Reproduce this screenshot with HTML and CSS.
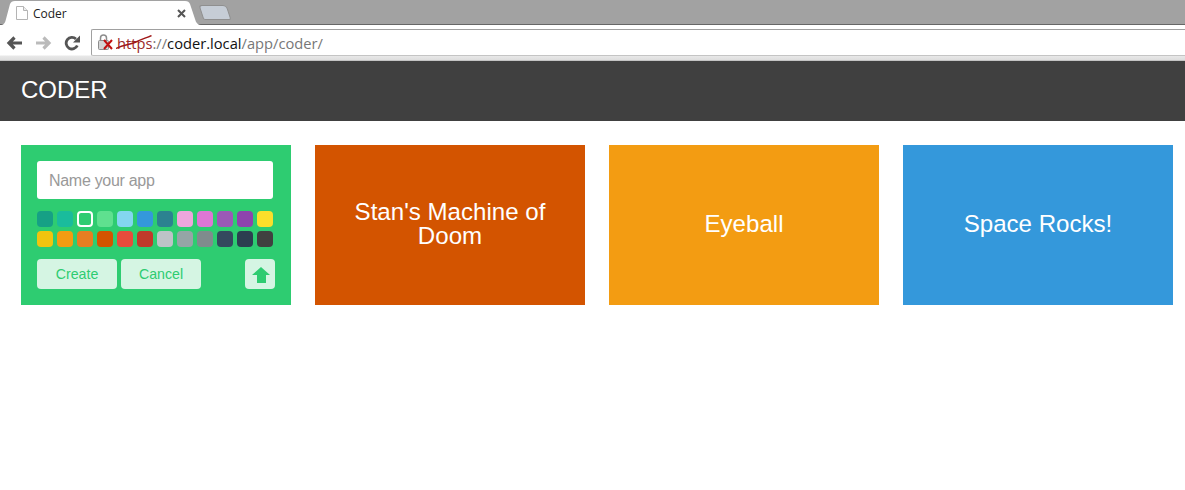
FILE: index.html
```html
<!DOCTYPE html>
<html lang="en">
<head>
	<meta charset="UTF-8">
	<title>Coder</title>
	<link rel="stylesheet" href="styles.css">
</head>
<body>
	<div class="chrome">
		<div class="tabstrip">
			<div class="tab">
				<svg class="tab-page" width="12" height="14" viewBox="0 0 12 14"><path d="M.5.500h7l4 4v9h-11z" fill="#fff" stroke="#b4b4b4"/><path d="M7.500.500v4h4" fill="#eee" stroke="#b4b4b4"/></svg>
				<span class="tab-title">Coder</span>
				<svg class="tab-x" width="9" height="9" viewBox="0 0 9 9"><path d="M1 1l7 7M8 1l-7 7" stroke="#555" stroke-width="2"/></svg>
			</div>
			<div class="newtab"></div>
		</div>
		<div class="toolbar">
			<svg class="nav" width="17" height="14" viewBox="0 0 17 14"><path d="M16 7H4M8.500 1.500L3 7l5.500 5.500" fill="none" stroke="#555" stroke-width="3.200"/></svg>
			<svg class="nav" width="17" height="14" viewBox="0 0 17 14"><path d="M1 7h12M8.500 1.500L14 7l-5.500 5.500" fill="none" stroke="#bbb" stroke-width="3.200"/></svg>
			<svg class="nav" width="16" height="16" viewBox="0 0 16 16"><path d="M13.300 10.500A5.800 5.800 0 1 1 12 4" fill="none" stroke="#555" stroke-width="2.800"/><path d="M9 7.500h7v-7z" fill="#555"/></svg>
			<div class="omnibox">
				<svg class="lock" width="16" height="17" viewBox="0 0 16 17"><rect x="1.500" y="6.500" width="10" height="9" rx="1" fill="#d4d4d4" stroke="#8c8c8c"/><path d="M3.500 6.500V4a3 3 0 0 1 6 0v2.500" fill="none" stroke="#8c8c8c" stroke-width="1.500"/><path d="M7 6l8 9M15 6l-8 9" stroke="#c01010" stroke-width="2"/></svg>
				<span class="url"><span class="scheme">https<svg class="slash" width="36" height="14" viewBox="0 0 36 14"><path d="M0 13.500C8 9 14 10 20 7S30 3 35.500 .5" fill="none" stroke="#a01818" stroke-width="1.400"/></svg></span><span class="path">://</span>coder.local<span class="path">/app/coder/</span></span>
			</div>
		</div>
	</div>

	<header class="appbar">CODER</header>

	<main class="apps">
		<form class="card card-new">
			<input class="name" type="text" placeholder="Name your app">
			<div class="swatches" id="swatches"></div>
			<div class="actions">
				<button class="btn" type="button">Create</button>
				<button class="btn" type="button">Cancel</button>
				<button class="btn btn-upload" type="button" aria-label="Upload">
					<svg width="18" height="16" viewBox="0 0 18 16"><path d="M9 0l9 8h-4v8H5V8H0z" fill="#2ecc71"/></svg>
				</button>
			</div>
		</form>
		<a class="card app pumpkin">Stan's Machine of Doom</a>
		<a class="card app orange">Eyeball</a>
		<a class="card app blue">Space Rocks!</a>
	</main>

	<script>
// palette for the new app form, third one is the selected colour
const colors = ["#16a085","#1abc9c","#2ecc71","#5fe08f","#83d6f0","#3498db","#2c8290","#eea6dc","#dd77d4","#9b59b6","#8e44ad","#fbdf2b",
	"#f1c40f","#f39c12","#e67e22","#d35400","#e74c3c","#c0392b","#bdc3c7","#95a5a6","#7f8c8d","#34495e","#2c3e50","#404040"];
const box = document.getElementById('swatches');
colors.forEach(function(c, i) {
	let el = document.createElement('div');
	el.className = i == 2 ? 'swatch selected' : 'swatch';
	el.style.background = c;
	box.appendChild(el);
});
	</script>
</body>
</html>
```

FILE: styles.css
```css
* {
  box-sizing: border-box;
}

body {
  margin: 0;
  background: #fff;
  font-family: "Liberation Sans", Arial, sans-serif;
}

.tabstrip {
  height: 25px;
  background: #a2a2a2;
  border-bottom: 1px solid #666;
  display: flex;
  align-items: flex-end;
}

.tab {
  width: 201px;
  height: 24px;
  margin-bottom: -1px;
  background: #fff;
  clip-path: path("M0 24C4 24 5 22 6 18L10 3C11 1 12 0 15 0L185 0C188 0 189 1 190 3L195 18C196 22 198 24 201 24Z");
  display: flex;
  align-items: center;
  padding: 0 15px 0 16px;
  font: 12px "Open Sans", sans-serif;
  color: #222;
}

.tab-title {
  margin-left: 5px;
  flex: 1;
}

.newtab {
  width: 28px;
  height: 15px;
  margin: 0 0 4px 0;
  background: #c6cdd6;
  border: 1px solid #8f8f8f;
  border-radius: 3px 4px 2px 2px;
  transform: skewX(18deg);
}

.toolbar {
  height: 36px;
  background: linear-gradient(#fff 30px, #e8e8e8 31px, #dedede 100%);
  border-bottom: 1px solid #c4c4c4;
  display: flex;
  align-items: center;
  padding-left: 6px;
  gap: 12px;
}

.omnibox {
  flex: 1;
  height: 27px;
  margin-left: -1px;
  background: #fff;
  border: 1px solid #a0a0a0;
  border-right: 0;
  border-bottom-color: #c4c4c4;
  border-radius: 2px 0 0 2px;
  display: flex;
  align-items: center;
  padding-left: 5px;
  font: 14.700px "Open Sans", sans-serif;
  color: #111;
}

.lock {
  flex: none;
  margin-right: 4px;
}

.url {
  white-space: nowrap;
}

.scheme {
  position: relative;
  color: #9a2a2a;
}

.slash {
  position: absolute;
  left: -1px;
  top: 2px;
}

.path {
  color: #777;
}

.appbar {
  height: 60px;
  background: #404040;
  color: #fff;
  font-size: 24px;
  line-height: 58px;
  padding-left: 21px;
}

.apps {
  display: flex;
  gap: 24px;
  padding: 24px 0 0 21px;
}

.card {
  flex: none;
  width: 270px;
  height: 160px;
}

.card-new {
  background: #2ecc71;
  padding: 16px;
}

.name {
  display: block;
  width: 236px;
  height: 38px;
  border: 0;
  border-radius: 3px;
  padding: 2px 12px 0;
  font: 16px "Liberation Sans", Arial, sans-serif;
  letter-spacing: -0.3px;
}
.name::placeholder {
  color: #999;
}

.swatches {
  display: grid;
  grid-template-columns: repeat(12, 16px);
  gap: 4px;
  margin-top: 12px;
}

.swatch {
  height: 16px;
  border-radius: 4px;
}
.swatch.selected {
  border: 2px solid #fff;
}

.actions {
  display: flex;
  gap: 4px;
  margin-top: 12px;
}

.btn {
  width: 80px;
  height: 30px;
  border: 0;
  border-radius: 4px;
  padding: 0;
  background: #d5f5e3;
  color: #2ecc71;
  font: 14.200px "Liberation Sans", Arial, sans-serif;
}

.btn-upload {
  width: 30px;
  margin-left: auto;
  display: flex;
  align-items: center;
  justify-content: center;
  padding: 1px 0 0 1px;
}

.app {
  display: flex;
  align-items: center;
  justify-content: center;
  padding: 0 24px 2px;
  text-align: center;
  color: #fff;
  font-size: 24.100px;
  line-height: 24px;
}

.pumpkin {
  background: #d35400;
}
.orange {
  background: #f39c12;
}
.blue {
  background: #3498db;
}
```
